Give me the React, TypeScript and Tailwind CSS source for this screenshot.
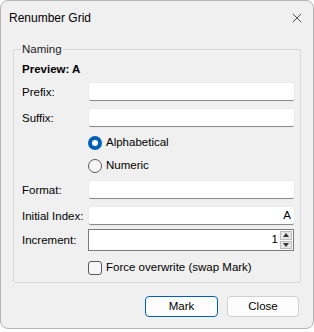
import { useState } from 'react'
import { X } from 'lucide-react'

const font = { fontFamily: '"Liberation Sans", Arial, sans-serif' }

function TextRow({ label, value, mt }: { label: string; value?: string; mt: string }) {
  return (
    <div className={`flex items-center h-[18px] ${mt}`}>
      <label className="w-[67px] shrink-0 text-[11.5px] leading-[14px]">{label}</label>
      <div className="flex-1 h-[18px] bg-white rounded-[2px] border-b border-[#8a8a8a] shadow-[0_0_0_0.5px_#e5e5e5] flex items-center justify-end px-[3px] text-[11.5px]">
        {value}
      </div>
    </div>
  )
}

function Radio({ checked }: { checked: boolean }) {
  return checked ? (
    <span className="w-[14px] h-[14px] rounded-full bg-[#005fb8] flex items-center justify-center">
      <span className="w-[6px] h-[6px] rounded-full bg-white" />
    </span>
  ) : (
    <span className="w-[14px] h-[14px] rounded-full border border-[#5a5a5a] bg-[#f7f7f7]" />
  )
}

export default function App() {
  const [mode, setMode] = useState<'alpha' | 'num'>('alpha')
  const [force, setForce] = useState(false)

  return (
    <div className="w-[314px] h-[332px] bg-white text-black" style={font}>
      <div className="w-[314px] h-[329px] bg-[#f0f0f0] border border-[#b5b5b5] rounded-[8px] flex flex-col">
        {/* Title bar */}
        <div className="h-[31px] flex items-center justify-between pl-[8px] pr-[8px] shrink-0">
          <span className="text-[12px] mt-[2px]">Renumber Grid</span>
          <X className="w-[16px] h-[16px] mt-[2px]" strokeWidth={1} />
        </div>

        <div className="px-[12px]">
          <fieldset className="mt-[10px] border border-[#d9d9d9] rounded-[2px] pl-[8px] pr-[6px] pb-[5px]">
            <legend className="px-[1px] -ml-[1px] text-[11.5px] leading-[14px] text-[#222]">Naming</legend>

            <div className="mt-[6px] text-[11.5px] leading-[14px] font-bold">Preview: A</div>

            <TextRow label="Prefix:" mt="mt-[7px]" />
            <TextRow label="Suffix:" mt="mt-[8px]" />

            <button
              type="button"
              onClick={() => setMode('alpha')}
              className="flex items-center h-[18px] mt-[7px] ml-[66px] gap-[4px] text-[11.5px]"
            >
              <Radio checked={mode === 'alpha'} />
              Alphabetical
            </button>
            <button
              type="button"
              onClick={() => setMode('num')}
              className="flex items-center h-[18px] mt-[5px] ml-[66px] gap-[4px] text-[11.5px]"
            >
              <Radio checked={mode === 'num'} />
              Numeric
            </button>

            <TextRow label="Format:" mt="mt-[6px]" />
            <TextRow label="Initial Index:" value="A" mt="mt-[8px]" />

            {/* Increment spin box */}
            <div className="flex items-center h-[22px] mt-[4px]">
              <label className="w-[66px] shrink-0 text-[11.5px] leading-[14px]">Increment:</label>
              <div className="flex-1 h-[22px] bg-white border border-[#7a7a7a] flex items-center justify-end pr-[1px] text-[11.5px]">
                <span className="mr-[2px]">1</span>
                <div className="w-[12px] h-[18px] flex flex-col gap-[1px]">
                  <div className="flex-1 bg-[#e6e6e6] border border-[#bcbcbc] flex items-center justify-center">
                    <svg width="6" height="4" viewBox="0 0 6 4"><path d="M0 4 L3 0 L6 4 Z" fill="#333" /></svg>
                  </div>
                  <div className="flex-1 bg-[#e6e6e6] border border-[#bcbcbc] flex items-center justify-center">
                    <svg width="6" height="4" viewBox="0 0 6 4"><path d="M0 0 L3 4 L6 0 Z" fill="#333" /></svg>
                  </div>
                </div>
              </div>
            </div>

            <button
              type="button"
              onClick={() => setForce(!force)}
              className="flex items-center h-[18px] mt-[8px] ml-[66px] gap-[4px] text-[11.5px]"
            >
              <span className="w-[14px] h-[14px] rounded-[3px] border border-[#5a5a5a] bg-[#f7f7f7] flex items-center justify-center text-[10px]">
                {force ? '✓' : ''}
              </span>
              Force overwrite (swap Mark)
            </button>
          </fieldset>

          {/* Buttons */}
          <div className="flex justify-end gap-[9px] mt-[13px] pr-[2px]">
            <button className="w-[73px] h-[21px] bg-[#fdfdfd] border border-[#005fb8] rounded-[4px] text-[11.5px]">
              Mark
            </button>
            <button className="w-[72px] h-[21px] bg-[#fdfdfd] border border-[#d0d0d0] rounded-[4px] text-[11.5px]">
              Close
            </button>
          </div>
        </div>
      </div>
    </div>
  )
}
